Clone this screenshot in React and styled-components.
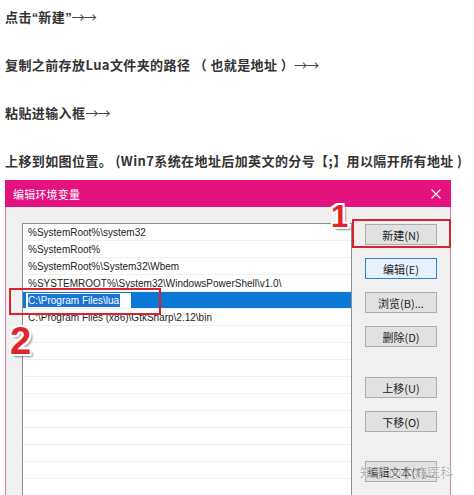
import React from "react";
import styled, { createGlobalStyle } from "styled-components";

const Global = createGlobalStyle`
  html, body { margin: 0; padding: 0; background: #fff; }
  body { width: 474px; height: 495px; overflow: hidden; position: relative; }
`;

const Page = styled.div`
  position: relative;
  width: 474px;
  height: 495px;
  overflow: hidden;
  background: #fff;
`;

const Steps = styled.div`
  display: flex;
  flex-direction: column;
  padding: 7px 0 0 5px;
`;

const Step = styled.p`
  margin: 0;
  height: 48px;
  line-height: 20px;
  font-family: "Noto Sans CJK SC", "Liberation Sans", sans-serif;
  font-weight: 700;
  font-size: 13px;
  letter-spacing: 0.4px;
  color: #333;
  white-space: nowrap;
  &:last-child { height: 21px; }
`;

const Quote = styled.span`
  font-family: "Liberation Sans", sans-serif;
  letter-spacing: 0;
`;

const Arrow = styled.span`
  font-family: "Noto Sans CJK SC", sans-serif;
  font-weight: 400;
  font-size: 13px;
  letter-spacing: -1px;
  color: #444;
`;

const Dialog = styled.div`
  margin: 8px 0 0 5px;
  width: 446px;
  display: flex;
  flex-direction: column;
`;

const TitleBar = styled.div`
  height: 27px;
  background: #e3127f;
  display: flex;
  align-items: center;
  justify-content: space-between;
  padding: 0 8px 0 8px;
  box-sizing: border-box;
  color: #fff;
`;

const Title = styled.span`
  font-family: "Noto Sans CJK SC", sans-serif;
  font-size: 11px;
  letter-spacing: 0.2px;
`;

const Close = styled.svg`
  width: 10px;
  height: 10px;
  margin-right: 2px;
`;

const Body = styled.div`
  height: 300px;
  background: #f0f0f0;
  border-left: 1px solid #d77bb0;
  border-right: 1px solid #c67fb0;
  display: flex;
  gap: 13px;
  padding: 16px 12px 0 16px;
  box-sizing: border-box;
  overflow: hidden;
`;

const List = styled.div`
  width: 330px;
  flex: none;
  background: #fff;
  border: 1px solid #8e8e8e;
  border-bottom: none;
  box-sizing: border-box;
  display: flex;
  flex-direction: column;
`;

const Row = styled.div`
  height: 17px;
  flex: none;
  box-sizing: border-box;
  border-bottom: 1px solid #f0f0f0;
  padding-left: 5px;
  display: flex;
  align-items: center;
  font-family: "Liberation Sans", sans-serif;
  font-size: 10px;
  color: #222;
  white-space: nowrap;
  background: ${(p) => (p.$selected ? "#0a78d4" : "#fff")};
`;

const EditBox = styled.div`
  margin-left: -2px;
  width: 105px;
  height: 15px;
  background: #fff;
  display: flex;
  align-items: center;
  padding-left: 2px;
  box-sizing: border-box;
`;

const Highlight = styled.span`
  background: #1a73d6;
  color: #fff;
  line-height: 13px;
  padding-right: 1px;
`;

const Buttons = styled.div`
  width: 72px;
  flex: none;
  display: flex;
  flex-direction: column;
  padding-top: 1px;
`;

const Btn = styled.div`
  height: 21px;
  box-sizing: border-box;
  border: 1px solid ${(p) => (p.$focus ? "#2a84d8" : "#adadad")};
  background: ${(p) => (p.$focus ? "#e5f1fb" : "#e1e1e1")};
  display: flex;
  align-items: center;
  justify-content: center;
  font-family: "Noto Sans CJK SC", "Liberation Sans", sans-serif;
  font-size: 11px;
  color: #222;
  white-space: nowrap;
  margin-top: ${(p) => p.$gap}px;
`;

const RedBox = styled.div`
  position: absolute;
  border: 2px solid #d9232e;
  box-sizing: border-box;
`;

const Num = styled.span`
  position: absolute;
  font-family: "Liberation Sans", sans-serif;
  font-weight: 700;
  color: #e0242c;
  line-height: 1;
  text-shadow: -2px 0 #fff, 2px 0 #fff, 0 -2px #fff, 0 2px #fff,
    -2px -2px #fff, 2px 2px #fff, -2px 2px #fff, 2px -2px #fff,
    3px 3px 2px rgba(0, 0, 0, 0.45);
`;

const Watermark = styled.span`
  position: absolute;
  left: 360px;
  top: 462px;
  font-family: "Noto Sans CJK SC", sans-serif;
  font-size: 13px;
  color: rgba(150, 150, 150, 0.7);
  text-shadow: 0 0 2px #fff;
  white-space: nowrap;
`;

const rows = [
  "%SystemRoot%\\system32",
  "%SystemRoot%",
  "%SystemRoot%\\System32\\Wbem",
  "%SYSTEMROOT%\\System32\\WindowsPowerShell\\v1.0\\",
  null,
  "C:\\Program Files (x86)\\GtkSharp\\2.12\\bin",
  "", "", "", "", "", "", "", "", "", "", "", "", "", "",
];

const buttons = [
  { t: "新建(N)", gap: 0 },
  { t: "编辑(E)", gap: 13, focus: true },
  { t: "浏览(B)...", gap: 13 },
  { t: "删除(D)", gap: 13 },
  { t: "上移(U)", gap: 30 },
  { t: "下移(O)", gap: 13 },
  { t: "编辑文本(T)...", gap: 29 },
];

export default function App() {
  return (
    <Page>
      <Global />
      <Steps>
        <Step>点击<Quote>“</Quote>新建<Quote>”</Quote><Arrow>→→</Arrow></Step>
        <Step>复制之前存放Lua文件夹的路径 （ 也就是地址 ）<Arrow>→→</Arrow></Step>
        <Step>粘贴进输入框<Arrow>→→</Arrow></Step>
        <Step>上移到如图位置。 (Win7系统在地址后加英文的分号【;】用以隔开所有地址 )</Step>
      </Steps>
      <Dialog>
        <TitleBar>
          <Title>编辑环境变量</Title>
          <Close viewBox="0 0 10 10">
            <path d="M0.5 0.5 L9.5 9.5 M9.5 0.5 L0.5 9.5" stroke="#fff" strokeWidth="1.1" />
          </Close>
        </TitleBar>
        <Body>
          <List>
            {rows.map((r, i) =>
              r === null ? (
                <Row key={i} $selected>
                  <EditBox>
                    <Highlight>C:\Program Files\lua</Highlight>
                  </EditBox>
                </Row>
              ) : (
                <Row key={i}>{r}</Row>
              )
            )}
          </List>
          <Buttons>
            {buttons.map((b) => (
              <Btn key={b.t} $gap={b.gap} $focus={b.focus}>
                {b.t}
              </Btn>
            ))}
          </Buttons>
        </Body>
      </Dialog>
      <RedBox style={{ left: 352, top: 219, width: 99, height: 29 }} />
      <RedBox style={{ left: 9, top: 288, width: 152, height: 27 }} />
      <Num style={{ left: 331, top: 201, fontSize: 31 }}>1</Num>
      <Num style={{ left: 10, top: 322, fontSize: 38 }}>2</Num>
      <Watermark>知乎 @小病医科</Watermark>
    </Page>
  );
}
